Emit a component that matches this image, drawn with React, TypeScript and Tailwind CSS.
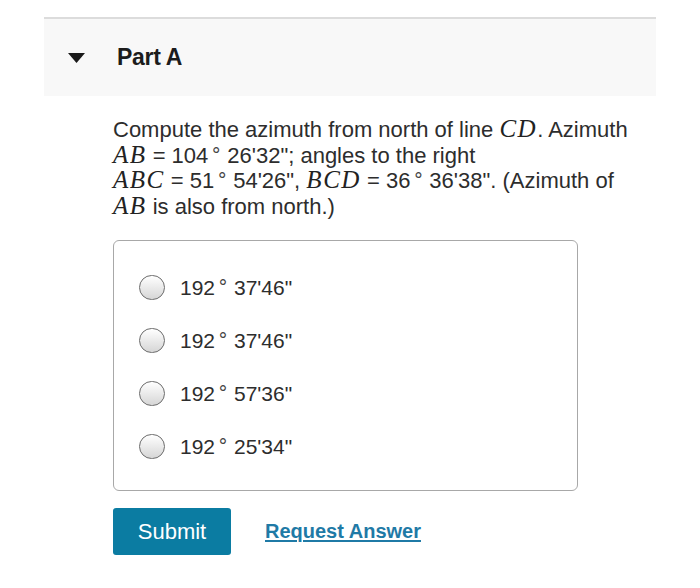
import React from "react";

const options = ["37'46\"", "37'46\"", "57'36\"", "25'34\""];

function M({ children }: { children: React.ReactNode }) {
  return (
    <span className="font-['Liberation_Serif',serif] text-[25px] italic leading-[20px] tracking-[1.5px] text-[#222]">
      {children}
    </span>
  );
}

function Deg() {
  return <span className="relative top-[-7px] ml-[2px] mr-[5px] font-['DejaVu_Sans',sans-serif] text-[19px] leading-none text-[#444]">∘</span>;
}

export default function App() {
  return (
    <div className="min-h-[588px] w-[700px] bg-white pt-[17px] font-['Liberation_Sans',Arial,sans-serif] text-[#2d2d2d]">
      <div className="ml-[44px] w-[612px]">
        <div className="flex h-[79px] items-center border-t-2 border-[#dcdcdc] bg-[#f8f8f8]">
          <svg className="ml-[24px]" width="17" height="10" viewBox="0 0 17 10">
            <path d="M0 0 H17 L8.5 10 Z" fill="#1a1a1a" />
          </svg>
          <span className="ml-[32px] text-[23px] font-bold tracking-[-0.3px] text-[#1c1c1c]">Part A</span>
        </div>

        <div className="pl-[69px] pr-[10px]">
          <p className="mt-[21px] text-[22px] leading-[25.7px]">
            Compute the azimuth from north of line <M>CD</M>. Azimuth
            <br />
            <M>AB</M> = 104<Deg />26'32"; angles to the right
            <br />
            <M>ABC</M> = 51<Deg />54'26", <M>BCD</M> = 36<Deg />36'38". (Azimuth of
            <br />
            <M>AB</M> is also from north.)
          </p>

          <div className="mt-[20px] flex h-[251px] w-[465px] flex-col gap-[28px] rounded-[6px] border-[1.5px] border-[#a8a8a8] pl-[25px] pt-[34px]">
            {options.map((opt, i) => (
              <label className="flex h-[25px] items-center" key={i}>
                <span className="h-[25px] w-[26px] shrink-0 rounded-full border-[1.5px] border-[#6b6b6b] bg-gradient-to-b from-[#ffffff] to-[#d6d6d6]" />
                <span className="ml-[15px] text-[21px] text-[#2d2d2d]">
                  192<Deg />{opt}
                </span>
              </label>
            ))}
          </div>

          <div className="mt-[17px] flex items-center">
            <button className="h-[47px] w-[118px] rounded-[3px] bg-[#0b7ca2] text-[22px] text-white" type="button">
              Submit
            </button>
            <a className="ml-[34px] text-[20px] font-bold text-[#1f7aa6] underline underline-offset-2" href="#">
              Request Answer
            </a>
          </div>
        </div>
      </div>
    </div>
  );
}
